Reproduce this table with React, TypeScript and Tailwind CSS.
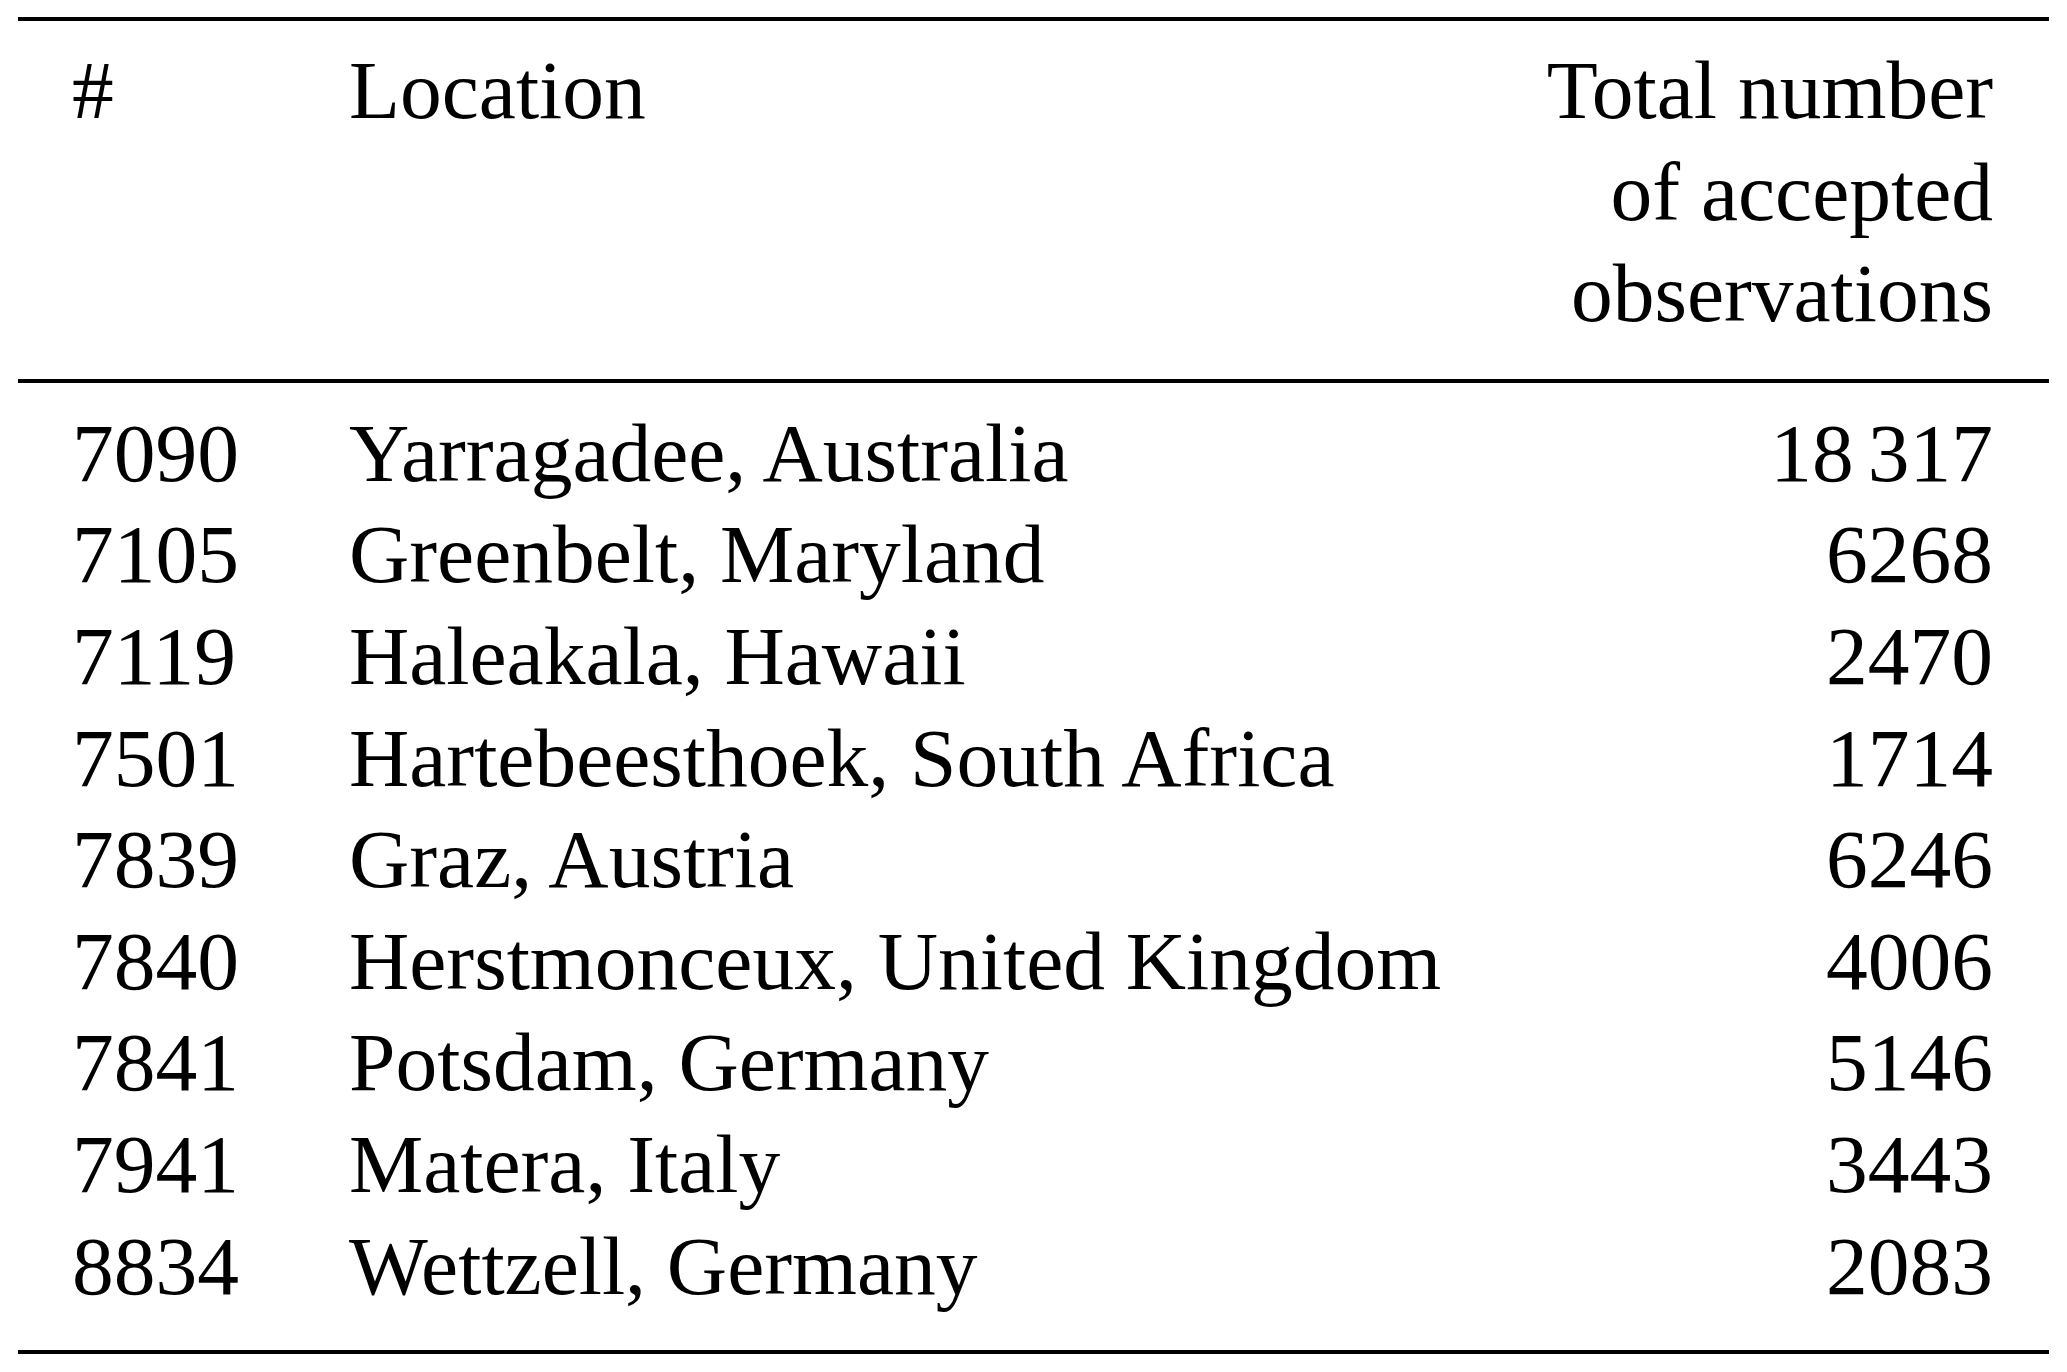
import React from "react";

const rows: [string, string, React.ReactNode][] = [
  ["7090", "Yarragadee, Australia", <>18<span className="inline-block w-[14px]" />317</>],
  ["7105", "Greenbelt, Maryland", "6268"],
  ["7119", "Haleakala, Hawaii", "2470"],
  ["7501", "Hartebeesthoek, South Africa", "1714"],
  ["7839", "Graz, Austria", "6246"],
  ["7840", "Herstmonceux, United Kingdom", "4006"],
  ["7841", "Potsdam, Germany", "5146"],
  ["7941", "Matera, Italy", "3443"],
  ["8834", "Wettzell, Germany", "2083"],
];

export default function App() {
  return (
    <div className="min-h-screen w-full bg-white">
      <div className="ml-[18px] w-[2031px] pt-[17px] font-['Liberation_Serif','Times_New_Roman',serif] text-[83.5px] leading-[101.6px] text-black">
        <div className="h-[4px] bg-black" />
        <div className="grid grid-cols-[277px_1fr_auto] pl-[54px] pr-[56px] pt-[19px] pb-[34px]">
          <div>#</div>
          <div>Location</div>
          <div className="text-right">
            Total number
            <br />
            of accepted
            <br />
            observations
          </div>
        </div>
        <div className="h-[4px] bg-black" />
        <div className="grid grid-cols-[277px_1fr_auto] pl-[54px] pr-[56px] pt-[20px] pb-[33px]">
          {rows.map(([id, loc, n]) => (
            <React.Fragment key={id}>
              <div>{id}</div>
              <div>{loc}</div>
              <div className="text-right">{n}</div>
            </React.Fragment>
          ))}
        </div>
        <div className="h-[4px] bg-black" />
      </div>
    </div>
  );
}
